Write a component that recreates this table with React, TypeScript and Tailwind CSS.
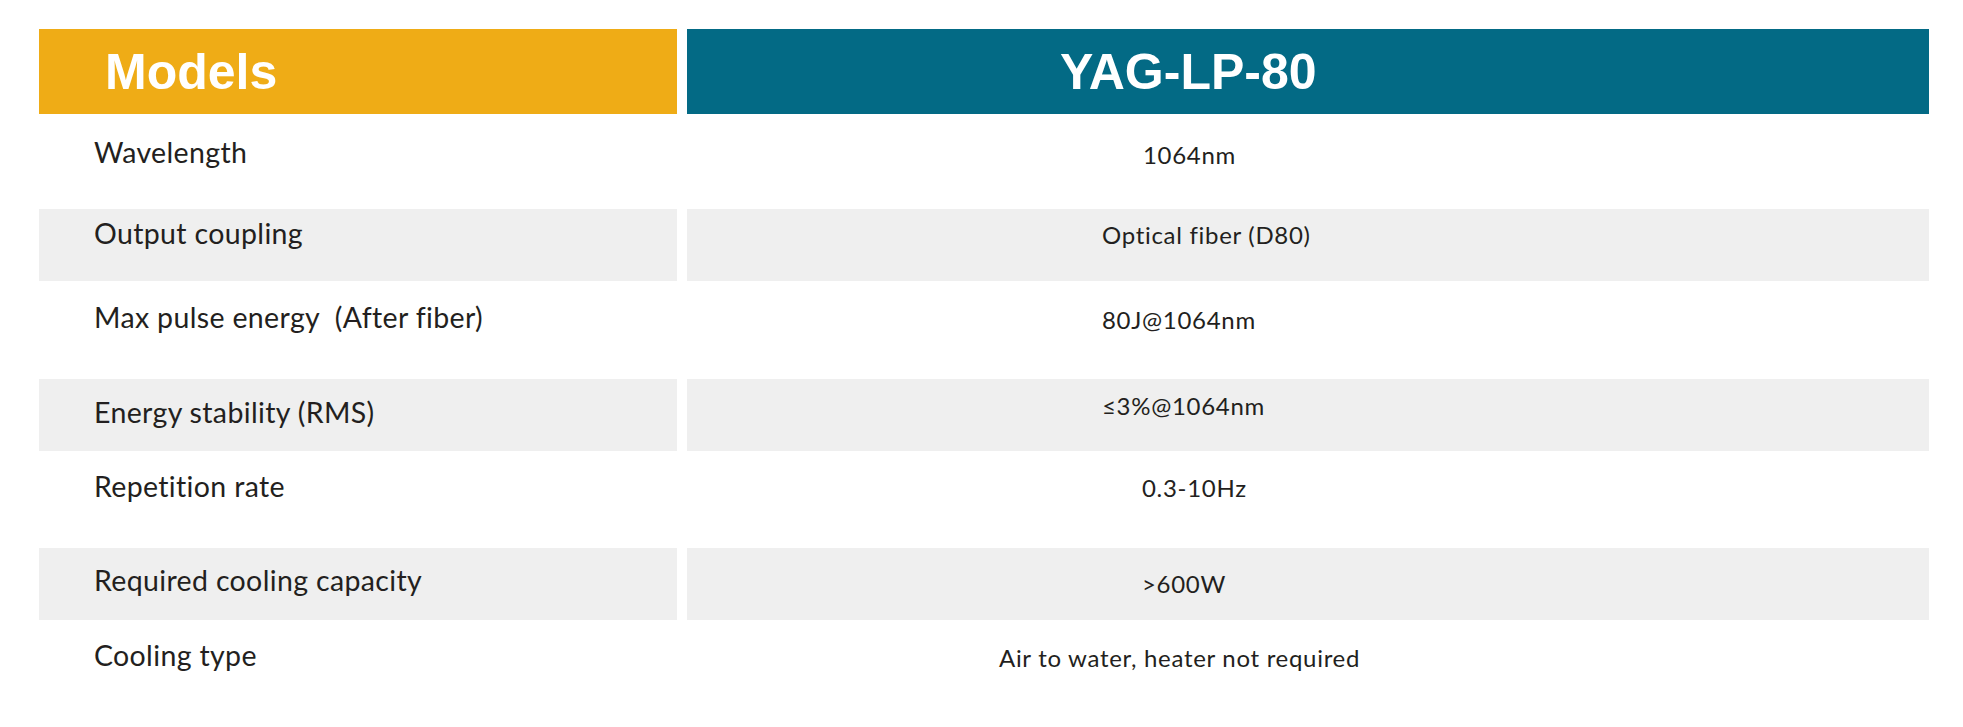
const rows = [
  { label: "Wavelength", value: "1064nm", gray: false, h: "h-[95px]", lpt: "pt-[24px]", vpt: "pt-[29px]", vpl: "pl-[456px]" },
  { label: "Output coupling", value: "Optical fiber (D80)", gray: true, h: "h-[72px]", lpt: "pt-[10px]", vpt: "pt-[14px]", vpl: "pl-[415px]" },
  { label: "Max pulse energy\u00a0\u00a0(After fiber)", value: "80J@1064nm", gray: false, h: "h-[98px]", lpt: "pt-[22px]", vpt: "pt-[27px]", vpl: "pl-[415px]" },
  { label: "Energy stability (RMS)", value: "≤3%@1064nm", gray: true, h: "h-[72px]", lpt: "pt-[19px]", vpt: "pt-[15px]", vpl: "pl-[415px]" },
  { label: "Repetition rate", value: "0.3-10Hz", gray: false, h: "h-[97px]", lpt: "pt-[21px]", vpt: "pt-[25px]", vpl: "pl-[455px]" },
  { label: "Required cooling capacity", value: ">600W", gray: true, h: "h-[72px]", lpt: "pt-[18px]", vpt: "pt-[24px]", vpl: "pl-[455px]" },
  { label: "Cooling type", value: "Air to water, heater not required", gray: false, h: "h-[107px]", lpt: "pt-[21px]", vpt: "pt-[26px]", vpl: "pl-[312px]" },
];

export default function App() {
  return (
    <div className="w-[1963px] h-[727px] bg-white pt-[29px] pl-[39px] overflow-hidden">
      <div className="grid grid-cols-[638px_1242px] gap-x-[10px]">
        <div className="h-[85px] bg-[#efac16] flex items-center pl-[66px]">
          <span className="text-white font-bold text-[50px] leading-none font-['Liberation_Sans',Arial,sans-serif]">Models</span>
        </div>
        <div className="h-[85px] bg-[#036a85] flex items-center pl-[373px]">
          <span className="text-white font-bold text-[50px] leading-none font-['Liberation_Sans',Arial,sans-serif]">YAG-LP-80</span>
        </div>

        {rows.map((r) => (
          <div key={r.label} className="contents">
            <div className={`${r.h} ${r.lpt} pl-[55px] ${r.gray ? "bg-[#efefef]" : ""}`}>
              <span className="block text-[28.5px] leading-none tracking-[0.35px] text-[#231f20] font-normal font-['Lato','Noto_Sans',sans-serif] whitespace-pre">
                {r.label}
              </span>
            </div>
            <div className={`${r.h} ${r.vpt} ${r.vpl} ${r.gray ? "bg-[#efefef]" : ""}`}>
              <span className="block text-[24px] leading-none tracking-[0.7px] text-[#231f20] font-normal font-['Lato','Noto_Sans',sans-serif] whitespace-pre">
                {r.value}
              </span>
            </div>
          </div>
        ))}
      </div>
    </div>
  );
}
